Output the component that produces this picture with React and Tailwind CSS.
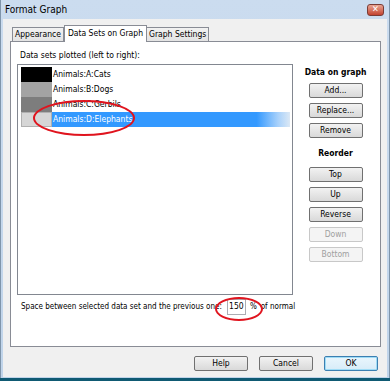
import React from 'react';

const font = { fontFamily: '"DejaVu Sans Condensed", "Liberation Sans", sans-serif' };

const rows = [
  { label: 'Animals:A:Cats', swatch: 'bg-[#000000]' },
  { label: 'Animals:B:Dogs', swatch: 'bg-[#a3a3a3]' },
  { label: 'Animals:C:Gerbils', swatch: 'bg-[#7d7d7d]' },
  { label: 'Animals:D:Elephants', swatch: 'bg-[#d6d6d6]', selected: true },
];

function Btn({ children, disabled, primary }) {
  return (
    <button
      className={`h-[15px] w-[54px] rounded-[2px] border text-[8.5px] leading-none flex items-center justify-center ${
        disabled
          ? 'border-[#c8c8c8] bg-[#f4f4f4] text-[#a0a0a0]'
          : primary
          ? 'border-[#3c7fb1] bg-gradient-to-b from-[#eaf6fd] to-[#d7ecf8] text-black shadow-[inset_0_0_0_1px_#9fdcf6]'
          : 'border-[#707070] bg-gradient-to-b from-[#f2f2f2] to-[#d9d9d9] text-black'
      }`}
    >
      {children}
    </button>
  );
}

export default function App() {
  return (
    <div className="relative w-[390px] h-[381px] bg-[#0f5a73] overflow-hidden" style={font}>
      <div className="flex flex-col w-[390px] h-[378px] bg-gradient-to-b from-[#cbdcef] to-[#c0d4ea] border-l border-r border-[#7f95ab]">
        {/* Title bar */}
        <div className="h-[19px] flex items-center justify-between pl-[4px] pr-[5px] shrink-0">
          <span className="text-[10px] text-black leading-none mt-[1px]">Format Graph</span>
          <div className="w-[17px] h-[12px] rounded-[3px] border border-[#7a3c36] bg-gradient-to-b from-[#e8a493] to-[#c2412f] flex items-center justify-center">
            <span className="text-white text-[9px] font-bold leading-none">✕</span>
          </div>
        </div>

        {/* Body */}
        <div className="flex-1 mx-[2px] mb-[1px] bg-[#f0f0f0] flex flex-col pl-[7px] pr-[6px] pt-[5px]">
          {/* Tabs */}
          <div className="flex items-end h-[17px] pl-[2px]">
            <div className="h-[14px] px-[2px] border border-b-0 border-[#898c95] bg-gradient-to-b from-[#f2f2f2] to-[#e3e3e3] text-[8.5px] flex items-center leading-none">Appearance</div>
            <div className="h-[17px] px-[3px] border border-b-0 border-[#898c95] bg-white text-[8.5px] flex items-center leading-none -mb-[1px] relative z-10 pb-[2px]">Data Sets on Graph</div>
            <div className="h-[14px] px-[2px] border border-b-0 border-l-0 border-[#898c95] bg-gradient-to-b from-[#f2f2f2] to-[#e3e3e3] text-[8.5px] flex items-center leading-none">Graph Settings</div>
          </div>

          {/* Tab panel */}
          <div className="h-[306px] border border-[#898c95] bg-white flex flex-col pl-[6px] pr-[6px] pt-[9px]">
            <div className="text-[8.5px] leading-none text-black ml-[3px]">Data sets plotted (left to right):</div>
            <div className="flex mt-[4px]">
              {/* List */}
              <div className="w-[276px] h-[231px] border border-[#828790] bg-white pt-[2px] pl-[3px] pr-[2px]">
                {rows.map((r) => (
                  <div key={r.label} className="flex h-[15px]">
                    <div className={`w-[31px] h-[15px] ${r.swatch} ${r.selected ? 'border border-[#b0b0b0]' : ''}`} />
                    <div
                      className={`flex-1 flex items-center pl-[1px] text-[8.5px] leading-none ${
                        r.selected
                          ? 'text-white bg-[linear-gradient(to_right,#3399ff_0%,#3399ff_86%,#a8d1fb_95%,#dbe8f5_100%)]'
                          : 'text-black'
                      }`}
                    >
                      {r.label}
                    </div>
                  </div>
                ))}
              </div>

              {/* Right column */}
              <div className="flex-1 flex flex-col items-center pt-[4px] pl-[4px]">
                <div className="text-[8.5px] font-bold leading-none">Data on graph</div>
                <div className="flex flex-col gap-[5px] mt-[7px]">
                  <Btn>Add...</Btn>
                  <Btn>Replace...</Btn>
                  <Btn>Remove</Btn>
                </div>
                <div className="text-[8.5px] font-bold leading-none mt-[11px]">Reorder</div>
                <div className="flex flex-col gap-[5px] mt-[9px]">
                  <Btn>Top</Btn>
                  <Btn>Up</Btn>
                  <Btn>Reverse</Btn>
                  <Btn disabled>Down</Btn>
                  <Btn disabled>Bottom</Btn>
                </div>
              </div>
            </div>

            {/* Spacing row */}
            <div className="flex items-center mt-[4px] ml-[4px] text-[8px] leading-none">
              <span>Space between selected data set and the previous one:</span>
              <div className="ml-[5px] w-[19px] h-[16px] border border-[#abadb3] flex items-center justify-center text-[8.5px]">150</div>
              <span className="ml-[4px]">%</span>
              <span className="ml-[4px]">of normal</span>
            </div>
          </div>

          {/* Footer */}
          <div className="flex justify-end gap-[11px] mt-[9px] pr-[3px]">
            <Btn>Help</Btn>
            <Btn>Cancel</Btn>
            <Btn primary>OK</Btn>
          </div>
        </div>
      </div>

      {/* Red annotation ellipses */}
      <div className="absolute left-[33px] top-[100px] w-[102px] h-[36px] rounded-[50%] border-2 border-[#e0141e]" />
      <div className="absolute left-[215px] top-[297px] w-[48px] h-[24px] rounded-[50%] border-2 border-[#e0141e]" />
    </div>
  );
}
